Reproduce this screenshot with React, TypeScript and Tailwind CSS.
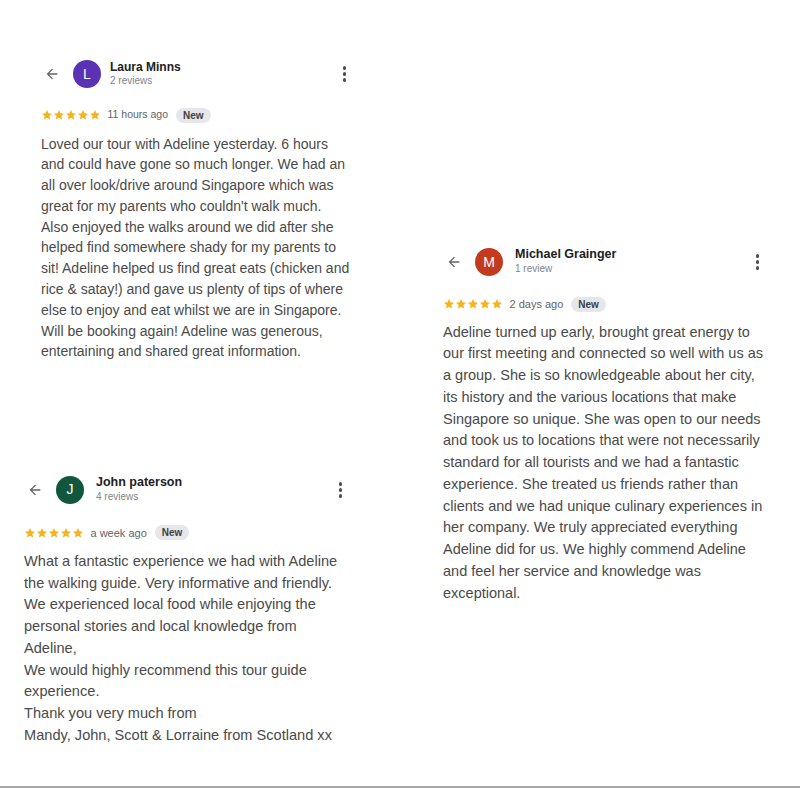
import React from 'react';

type Review = {
  name: string;
  initial: string;
  avatar: string;
  reviews: string;
  when: string;
  lines: string[];
  textSize: string;
  leading: string;
  nameSize: string;
  metaSize: string;
};

const REVIEWS: Record<string, Review> = {
  laura: {
    name: 'Laura Minns',
    initial: 'L',
    avatar: 'bg-[#5a32b4]',
    reviews: '2 reviews',
    when: '11 hours ago',
    textSize: 'text-[14px]',
    leading: 'leading-[20.8px]',
    nameSize: 'text-[12px]',
    metaSize: 'text-[10.5px]',
    lines: [
      'Loved our tour with Adeline yesterday. 6 hours',
      'and could have gone so much longer. We had an',
      'all over look/drive around Singapore which was',
      "great for my parents who couldn't walk much.",
      'Also enjoyed the walks around we did after she',
      'helped find somewhere shady for my parents to',
      'sit! Adeline helped us find great eats (chicken and',
      'rice & satay!) and gave us plenty of tips of where',
      'else to enjoy and eat whilst we are in Singapore.',
      'Will be booking again! Adeline was generous,',
      'entertaining and shared great information.',
    ],
  },
  michael: {
    name: 'Michael Grainger',
    initial: 'M',
    avatar: 'bg-[#c23b1e]',
    reviews: '1 review',
    when: '2 days ago',
    textSize: 'text-[14.5px]',
    leading: 'leading-[21.75px]',
    nameSize: 'text-[12.5px]',
    metaSize: 'text-[11px]',
    lines: [
      'Adeline turned up early, brought great energy to',
      'our first meeting and connected so well with us as',
      'a group. She is so knowledgeable about her city,',
      'its history and the various locations that make',
      'Singapore so unique. She was open to our needs',
      'and took us to locations that were not necessarily',
      'standard for all tourists and we had a fantastic',
      'experience. She treated us friends rather than',
      'clients and we had unique culinary experiences in',
      'her company. We truly appreciated everything',
      'Adeline did for us. We highly commend Adeline',
      'and feel her service and knowledge was',
      'exceptional.',
    ],
  },
  john: {
    name: 'John paterson',
    initial: 'J',
    avatar: 'bg-[#11573d]',
    reviews: '4 reviews',
    when: 'a week ago',
    textSize: 'text-[14.6px]',
    leading: 'leading-[21.75px]',
    nameSize: 'text-[12.5px]',
    metaSize: 'text-[11px]',
    lines: [
      'What a fantastic experience we had with Adeline',
      'the walking guide. Very informative and friendly.',
      'We experienced local food while enjoying the',
      'personal stories and local knowledge from',
      'Adeline,',
      'We would highly recommend this tour guide',
      'experience.',
      'Thank you very much from',
      'Mandy, John, Scott & Lorraine from Scotland xx',
    ],
  },
};

const Star = () => (
  <svg viewBox="0 0 24 24" className="w-[12px] h-[12px] fill-[#f6b31b]">
    <path d="M12 2.2l2.95 6.4 7 .75-5.25 4.7 1.5 6.9L12 17.45l-6.2 3.5 1.5-6.9-5.25-4.7 7-.75z" />
  </svg>
);

const BackArrow = () => (
  <svg viewBox="0 0 24 24" className="w-[16px] h-[16px] fill-[#5f6368]">
    <path d="M20 11H7.83l5.59-5.59L12 4l-8 8 8 8 1.41-1.41L7.83 13H20v-2z" />
  </svg>
);

const MoreDots = () => (
  <div className="flex flex-col gap-[2.5px] items-center">
    <span className="w-[3.5px] h-[3.5px] rounded-full bg-[#4a4d51]" />
    <span className="w-[3.5px] h-[3.5px] rounded-full bg-[#4a4d51]" />
    <span className="w-[3.5px] h-[3.5px] rounded-full bg-[#4a4d51]" />
  </div>
);

const ReviewCard: React.FC<{
  review: Review;
  className: string;
  starsGap: string;
  textGap: string;
  nameGap: string;
}> = ({ review, className, starsGap, textGap, nameGap }) => (
  <div className={className}>
    <div className="flex items-center h-[28px] pl-[3px]">
      <BackArrow />
      <div
        className={`ml-[13px] w-[28px] h-[28px] rounded-full ${review.avatar} flex items-center justify-center text-white text-[14px]`}
      >
        {review.initial}
      </div>
      <div className={`${nameGap} flex flex-col leading-none -mt-[2px]`}>
        <span className={`${review.nameSize} font-bold text-[#202124]`}>{review.name}</span>
        <span className="text-[10px] text-[#80868b] mt-[3px]">{review.reviews}</span>
      </div>
      <div className="ml-auto pr-[4px]">
        <MoreDots />
      </div>
    </div>

    <div className={`flex items-center h-[14px] ${starsGap}`}>
      <div className="flex">
        <Star />
        <Star />
        <Star />
        <Star />
        <Star />
      </div>
      <span className={`ml-[6.5px] ${review.metaSize} text-[#5f6368]`}>{review.when}</span>
      <span className="ml-[8px] px-[7px] h-[15px] flex items-center rounded-full bg-[#e6e7ea] text-[10px] font-bold text-[#3c4043]">
        New
      </span>
    </div>

    <div className={`${textGap} ${review.textSize} ${review.leading} text-[#4a4a4a]`}>
      {review.lines.map((line, i) => (
        <div key={i} className="whitespace-nowrap">
          {line}
        </div>
      ))}
    </div>
  </div>
);

export default function App() {
  return (
    <div
      className="w-[800px] h-[788px] bg-white flex flex-col"
      style={{ fontFamily: '"Liberation Sans", Arial, sans-serif' }}
    >
      <div className="flex flex-1">
        <div className="w-[400px] flex flex-col">
          <ReviewCard
            review={REVIEWS.laura}
            className="ml-[41px] mt-[60px] w-[309px]"
            starsGap="mt-[20px]"
            textGap="mt-[11.5px]"
            nameGap="ml-[9px]"
          />
          <ReviewCard
            review={REVIEWS.john}
            className="ml-[24px] mt-[113.7px] w-[322px]"
            starsGap="mt-[22px]"
            textGap="mt-[11px]"
            nameGap="ml-[12px]"
          />
        </div>
        <div className="flex-1">
          <ReviewCard
            review={REVIEWS.michael}
            className="ml-[43px] mt-[248px] w-[320px]"
            starsGap="mt-[21px]"
            textGap="mt-[10.5px]"
            nameGap="ml-[12px]"
          />
        </div>
      </div>
      <div className="h-[2px] bg-[#a9a9a9]" />
    </div>
  );
}
